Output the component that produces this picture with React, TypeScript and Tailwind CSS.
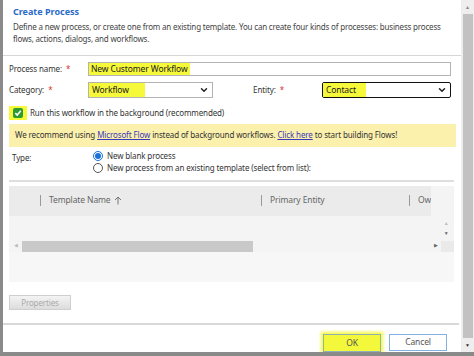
import { ChevronDown } from "lucide-react";

const font = { fontFamily: '"Noto Sans", "Open Sans", sans-serif' };

function Hl({ children, className = "" }: { children: React.ReactNode; className?: string }) {
	return <span className={`bg-[#f6f83a] ${className}`}>{children}</span>;
}

function Req() {
	return <span className="text-[#d9372b] ml-[4px]">*</span>;
}

export default function App() {
	return (
		<div
			className="w-[474px] h-[356px] flex flex-col bg-[#7d7d7d] overflow-hidden text-[#333] text-[8px] tracking-[-0.12px]"
			style={font}
		>
			<div className="flex flex-1 min-h-0">
				<div className="w-[3px] bg-[#8a8a8a]" />
				<div className="flex-1 flex flex-col bg-white">
					{/* header */}
					<div className="h-[56px] border-b border-[#d6d6d6] pl-[10px] pr-[4px] pt-[3px] bg-white">
						<div className="text-[#2a6ac8] font-bold text-[9px] tracking-normal leading-[18px]">Create Process</div>
						<p className="leading-[12px] text-[#444] tracking-[-0.18px]">
							Define a new process, or create one from an existing template. You can create four kinds of processes: business process flows, actions, dialogs, and workflows.
						</p>
					</div>

					{/* form */}
					<div className="flex items-center h-[14px] mt-[6px] pl-[6px] pr-[10px]">
						<div className="w-[79px]">
							Process name:<Req />
						</div>
						<div className="flex-1 h-[14px] border border-[#b3b3b3] flex items-center">
							<Hl className="px-[2px] leading-[12px] text-[#222] text-[8.5px]">New Customer Workflow</Hl>
						</div>
					</div>

					<div className="flex items-center h-[16px] mt-[6px] pl-[6px] pr-[10px]">
						<div className="w-[79px]">
							Category:<Req />
						</div>
						<div className="w-[125px] h-[16px] border border-[#b3b3b3] flex items-center justify-between pr-[3px]">
							<Hl className="px-[3px] pr-[16px] leading-[14px] text-[#222] text-[8.5px]">Workflow</Hl>
							<ChevronDown size={10} strokeWidth={3.5} className="text-[#222]" />
						</div>
						<div className="w-[109px] text-right pr-[38px]">
							Entity:<Req />
						</div>
						<div className="flex-1 h-[16px] border-[1.5px] border-[#111] rounded-[2px] flex items-center justify-between pr-[3px]">
							<Hl className="pl-[3px] pr-[10px] leading-[14px] text-[#222] text-[8.5px]">Contact</Hl>
							<ChevronDown size={10} strokeWidth={3.5} className="text-[#222]" />
						</div>
					</div>

					<div className="flex items-center h-[14px] mt-[8px] pl-[6px]">
						<div className="bg-[#f6f83a] w-[18px] h-[14px] flex items-center justify-center mr-[3px]">
							<div className="w-[10px] h-[10px] bg-[#2e9a32] rounded-[2px] flex items-center justify-center">
								<svg width="8" height="8" viewBox="0 0 8 8">
									<path d="M1.3 4.2 L3.2 6 L6.8 1.8" fill="none" stroke="white" strokeWidth="1.6" />
								</svg>
							</div>
						</div>
						<span>Run this workflow in the background (recommended)</span>
					</div>

					{/* banner */}
					<div className="mx-[6px] mr-[5px] mt-[4px] h-[23px] bg-[#fbf1ad] flex items-center pl-[6px] text-[#333]">
						<span>
							We recommend using <span className="text-[#3a3ab8] underline">Microsoft Flow</span> instead of background workflows.{" "}
							<span className="text-[#3a3ab8] underline">Click here</span> to start building Flows!
						</span>
					</div>

					{/* type */}
					<div className="flex pl-[9px] mt-[3px]">
						<div className="w-[81px] pt-[2px]">Type:</div>
						<div className="flex flex-col">
							<div className="flex items-center h-[12px]">
								<span className="w-[10px] h-[10px] rounded-full border border-[#1a73d6] flex items-center justify-center mr-[4px]">
									<span className="w-[6px] h-[6px] rounded-full bg-[#1a73d6]" />
								</span>
								New blank process
							</div>
							<div className="flex items-center h-[12px]">
								<span className="w-[10px] h-[10px] rounded-full border border-[#555] mr-[4px]" />
								New process from an existing template (select from list):
							</div>
						</div>
					</div>

					{/* table */}
					<div className="mx-[6px] mr-[7px] mt-[6px] border-t-2 border-[#dedede]" />
					<div className="mx-[6px] mr-[7px] mt-[4px] h-[97px] bg-[#f5f4f4] flex flex-col">
						<div className="h-[30px] flex items-center bg-[#ebebeb] mr-[23px] text-[#666] text-[8.5px]">
							<div className="w-[31px]" />
							<div className="w-[221px] flex items-center">
								<span className="w-px h-[11px] bg-[#999] mr-[8px]" />
								Template Name
								<svg width="8" height="9" viewBox="0 0 8 9" className="ml-[3px]">
									<path d="M4 8.5 V1 M1 4 L4 1 L7 4" fill="none" stroke="#777" strokeWidth="1" />
								</svg>
							</div>
							<div className="w-[148px] flex items-center">
								<span className="w-px h-[11px] bg-[#999] mr-[8px]" />
								Primary Entity
							</div>
							<div className="flex-1 flex items-center overflow-hidden">
								<span className="w-px h-[11px] bg-[#999] mr-[8px]" />
								Ow
							</div>
						</div>
						<div className="h-[25px] flex justify-end pr-[4px]">
							<div className="flex flex-col items-center justify-center gap-[5px] w-[8px]">
								<span className="text-[#bbb] text-[5px] leading-[5px]">▲</span>
								<span className="text-[#666] text-[5px] leading-[5px]">▼</span>
							</div>
						</div>
						<div className="h-[11px] flex items-center">
							<span className="w-[13px] text-[5px] text-[#bbb] text-center">◀</span>
							<div className="w-[231px] h-[11px] bg-[#c9c9c9]" />
							<div className="flex-1" />
							<span className="w-[10px] text-[5px] text-[#666] text-center">▶</span>
							<div className="w-[13px] h-[11px] bg-[#eaeaea]" />
						</div>
						<div className="flex-1 bg-[#f7f7f7]" />
					</div>

					{/* properties */}
					<div className="pl-[6px] mt-[13px]">
						<div className="w-[62px] h-[15px] border border-[#cfcfcf] bg-gradient-to-b from-[#f4f4f4] to-[#dcdcdc] text-[#aaa] flex items-center justify-center">
							Properties
						</div>
					</div>

					<div className="mt-[13px] border-t-2 border-[#d9d9d9] mr-[2px]" />

					{/* footer */}
					<div className="flex-1 flex items-start justify-end gap-[8px] pr-[14px] pt-[9px]">
						<div className="w-[58px] h-[18px] bg-[#f4f83a] border border-[#8fb0b8] flex items-center justify-center text-[#555] text-[8.5px] shadow-[0_0_3px_2px_#f4f83a]">
							OK
						</div>
						<div className="w-[58px] h-[17px] border border-[#84b1e3] bg-white flex items-center justify-center text-[#555] text-[8.5px]">
							Cancel
						</div>
					</div>
				</div>

				{/* scrollbar */}
				<div className="w-[13px] bg-[#eeeeee] flex flex-col items-center">
					<span className="text-[5px] text-[#888] leading-[14px]">▲</span>
					<div className="flex-1 w-[10px] bg-[#c2c2c2]" />
					<span className="text-[5px] text-[#333] leading-[14px]">▼</span>
				</div>
			</div>
			<div className="h-[4px] bg-[#8a8a8a]" />
		</div>
	);
}
